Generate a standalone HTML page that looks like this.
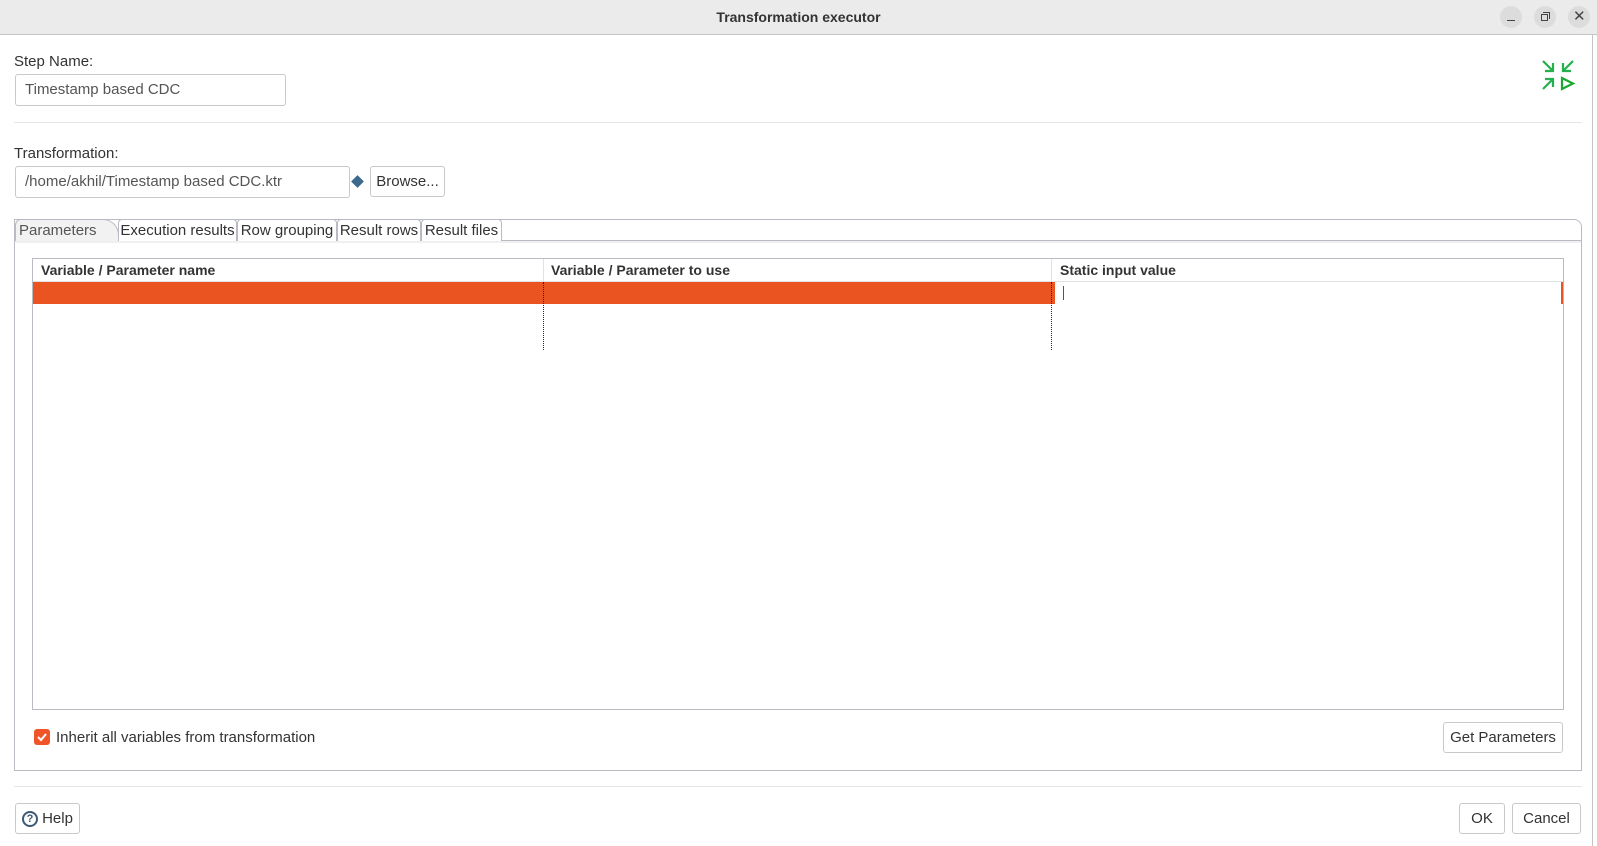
<!DOCTYPE html>
<html><head><style>
*{box-sizing:border-box;margin:0;padding:0}
body{width:1597px;height:846px;background:#fff;font-family:"Liberation Sans",sans-serif;color:#333;position:relative;overflow:hidden;font-size:15px}
.a{position:absolute}
.title{left:0;top:0;width:1597px;height:35px;background:#ebebeb;border-bottom:1px solid #c4c4c4;text-align:center;font-weight:bold;font-size:14px;line-height:35px;color:#333}
.wb{width:22px;height:22px;border-radius:50%;background:#dcdcdc;top:6px}
.inp{border:1px solid #c9c9c9;border-radius:3px;background:#fff;color:#555;padding-left:9px;line-height:30px;font-size:15px}
.btn{border:1px solid #c9c9c9;border-radius:3px;background:#fff;color:#333;text-align:center;line-height:29px;font-size:15px}
.lbl{font-size:15px;color:#333}
.sep{height:1px;background:#e6e6e6}
.tab{top:219px;height:22px;line-height:22px;font-size:15px;color:#333;text-align:center;border:1px solid #b8bcc2;border-bottom:none;border-radius:4px 4px 0 0;background:#fff}
.hd{top:259px;height:22px;line-height:22px;font-weight:bold;font-size:14px;color:#333}
</style></head><body>
<div class="a title">Transformation executor</div>
<div class="a wb" style="left:1500px"></div><div class="a" style="left:1507px;top:20px;width:8px;height:1px;background:#444"></div>
<div class="a wb" style="left:1534px"></div><div class="a" style="left:1541px;top:14px;width:7px;height:7px;border:1px solid #444"></div><div class="a" style="left:1543px;top:12px;width:7px;height:7px;border-top:1px solid #444;border-right:1px solid #444"></div>
<div class="a wb" style="left:1568px"></div><div class="a" style="left:1573px;top:6px;font-size:15px;line-height:22px;color:#444">✕</div>

<div class="a lbl" style="left:14px;top:53px">Step Name:</div>
<div class="a inp" style="left:15px;top:74px;width:271px;height:32px">Timestamp based CDC</div>
<svg class="a" style="left:1540px;top:58px" width="36" height="34" viewBox="0 0 36 34" fill="none" stroke="#22b14c" stroke-width="2.2">
<path d="M3 3l10 10M13 5v8H5"/><path d="M33 3L23 13M23 5v8h8"/><path d="M3 31l10-10M5 21h8v8"/><path d="M22 20v11l11-5.5z" stroke="#1aa830"/>
</svg>
<div class="a sep" style="left:14px;top:122px;width:1568px"></div>

<div class="a lbl" style="left:14px;top:145px">Transformation:</div>
<div class="a inp" style="left:15px;top:166px;width:335px;height:32px">/home/akhil/Timestamp based CDC.ktr</div>
<div class="a" style="left:353px;top:177px;width:9px;height:9px;background:#3d6a8c;transform:rotate(45deg)"></div>
<div class="a btn" style="left:370px;top:166px;width:75px;height:31px">Browse...</div>

<div class="a" style="left:14px;top:219px;width:1568px;height:552px;border:1px solid #b8bcc2;border-radius:0 8px 0 0;background:#fff"></div>
<div class="a" style="left:15px;top:240px;width:1566px;height:3px;background:#f0f0f0;border-top:1px solid #b8bcc2"></div>
<div class="a tab" style="left:15px;width:104px;background:#f2f2f2;text-align:left;padding-left:3px;color:#555;border-radius:6px 16px 0 0">Parameters</div>
<div class="a tab" style="left:118px;width:119px">Execution results</div>
<div class="a tab" style="left:237px;width:100px">Row grouping</div>
<div class="a tab" style="left:337px;width:84px">Result rows</div>
<div class="a tab" style="left:421px;width:81px">Result files</div>

<div class="a" style="left:32px;top:258px;width:1532px;height:452px;border:1px solid #b8bcc2;background:#fff"></div>
<div class="a" style="left:33px;top:281px;width:1530px;height:1px;background:#e2e2e2"></div>
<div class="a" style="left:543px;top:259px;width:1px;height:22px;background:#e2e2e2"></div>
<div class="a" style="left:1051px;top:259px;width:1px;height:22px;background:#e2e2e2"></div>
<div class="a hd" style="left:41px">Variable / Parameter name</div>
<div class="a hd" style="left:551px">Variable / Parameter to use</div>
<div class="a hd" style="left:1060px">Static input value</div>
<div class="a" style="left:33px;top:282px;width:1022px;height:22px;background:#e95420"></div>
<div class="a" style="left:1561px;top:282px;width:2px;height:22px;background:#e95420"></div>
<div class="a" style="left:543px;top:282px;height:68px;border-left:1px dotted #222"></div>
<div class="a" style="left:1051px;top:282px;height:68px;border-left:1px dotted #222"></div>
<div class="a" style="left:1063px;top:286px;width:1px;height:14px;background:#555"></div>

<div class="a" style="left:34px;top:729px;width:16px;height:16px;border-radius:3px;background:#f0552a"></div>
<svg class="a" style="left:34px;top:729px" width="16" height="16"><path d="M4 8l3 3 5-6" stroke="#fff" stroke-width="2" fill="none"/></svg>
<div class="a lbl" style="left:56px;top:729px">Inherit all variables from transformation</div>
<div class="a btn" style="left:1443px;top:722px;width:120px;height:31px">Get Parameters</div>

<div class="a sep" style="left:14px;top:786px;width:1568px"></div>
<div class="a btn" style="left:15px;top:803px;width:65px;height:31px;padding-left:20px">Help</div>
<div class="a" style="left:22px;top:811px;width:16px;height:16px;border:2px solid #3d5a75;border-radius:50%;font-size:11px;line-height:12px;text-align:center;font-weight:bold;color:#3d5a75">?</div>
<div class="a btn" style="left:1459px;top:803px;width:46px;height:31px">OK</div>
<div class="a btn" style="left:1512px;top:803px;width:69px;height:31px">Cancel</div>
<div class="a" style="left:1592px;top:35px;width:1px;height:811px;background:#c4c4c4"></div>
</body></html>
